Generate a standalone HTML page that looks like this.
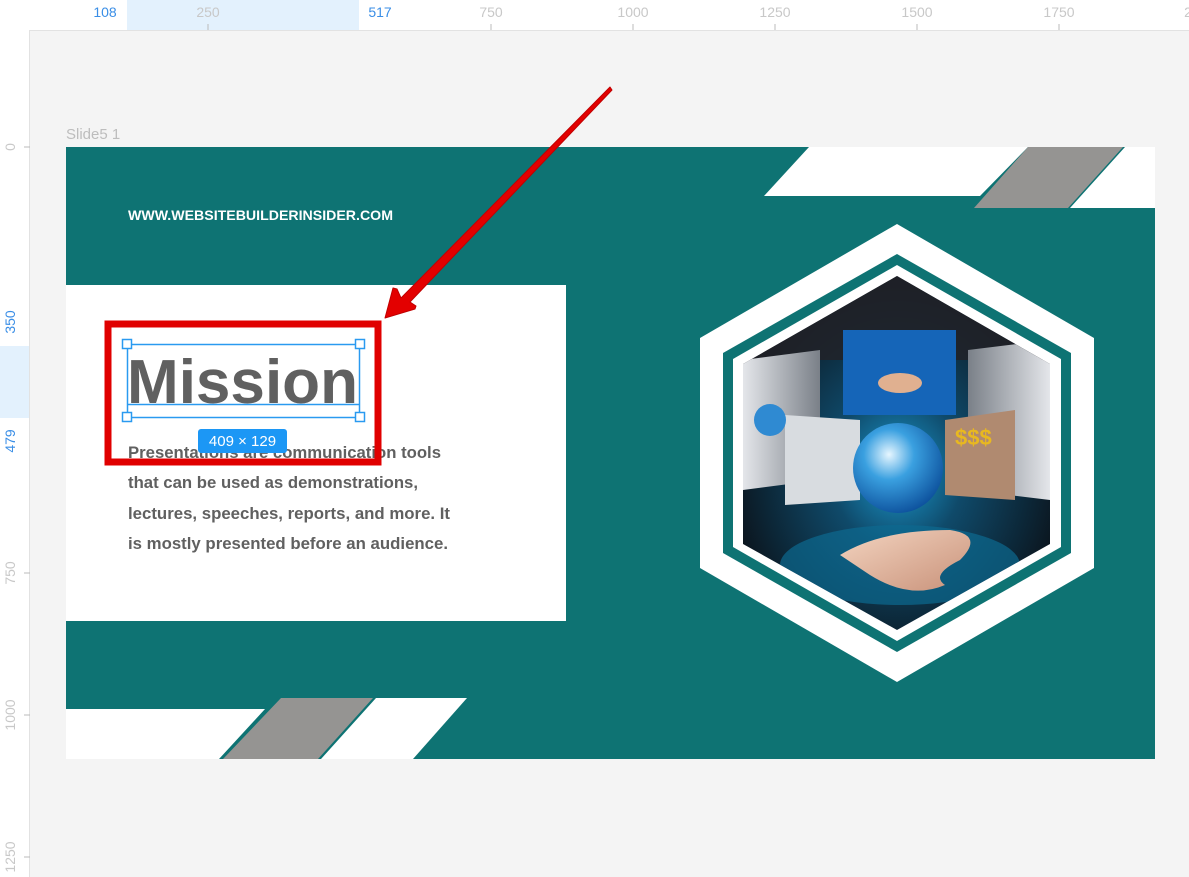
<!DOCTYPE html>
<html><head><meta charset="utf-8"><style>
html,body{margin:0;padding:0;background:#f4f4f4;width:1189px;height:877px;overflow:hidden}
svg{display:block}
text{font-family:"Liberation Sans",sans-serif}
</style></head><body>
<svg width="1189" height="877" viewBox="0 0 1189 877" xmlns="http://www.w3.org/2000/svg">
<defs>
<clipPath id="ph"><polygon points="897,276 1050,364 1050,544 897,630 743,544 743,364"/></clipPath>
<radialGradient id="glb" cx="0.4" cy="0.35" r="0.7"><stop offset="0" stop-color="#e6f6ff"/><stop offset="0.4" stop-color="#3aa0e0"/><stop offset="1" stop-color="#0b4e9a"/></radialGradient>
<radialGradient id="bg" cx="0.5" cy="0.55" r="0.6"><stop offset="0" stop-color="#1a9ad0"/><stop offset="0.35" stop-color="#0f4a6a"/><stop offset="1" stop-color="#0a0a0e"/></radialGradient>
<linearGradient id="sk" x1="0" y1="0" x2="1" y2="1"><stop offset="0" stop-color="#f3d4c0"/><stop offset="1" stop-color="#c9927a"/></linearGradient>
<linearGradient id="pl" x1="0" y1="0" x2="1" y2="0"><stop offset="0" stop-color="#e4e6ea"/><stop offset="1" stop-color="#7a8088"/></linearGradient>
<linearGradient id="pr" x1="1" y1="0" x2="0" y2="0"><stop offset="0" stop-color="#e4e6ea"/><stop offset="1" stop-color="#7a8088"/></linearGradient>
</defs>
<rect width="1189" height="877" fill="#f4f4f4"/>
<rect x="0" y="0" width="1189" height="30" fill="#fff"/>
<rect x="127" y="0" width="232" height="30" fill="#e3f1fd"/>
<line x1="0" y1="30.5" x2="1189" y2="30.5" stroke="#e2e2e2"/>
<rect x="0" y="30" width="30" height="847" fill="#fff"/>
<rect x="0" y="346" width="30" height="72" fill="#e3f1fd"/>
<line x1="29.5" y1="30" x2="29.5" y2="877" stroke="#e2e2e2"/>
<g font-size="14" fill="#c8c8c8" text-anchor="middle">
<text x="105" y="17" fill="#3a8ee6">108</text>
<text x="208" y="17">250</text>
<text x="380" y="17" fill="#3a8ee6">517</text>
<text x="491" y="17">750</text>
<text x="633" y="17">1000</text>
<text x="775" y="17">1250</text>
<text x="917" y="17">1500</text>
<text x="1059" y="17">1750</text>
<text x="1188" y="17">2</text>
</g>
<g stroke="#bbb"><line x1="208" y1="24" x2="208" y2="30"/><line x1="491" y1="24" x2="491" y2="30"/><line x1="633" y1="24" x2="633" y2="30"/><line x1="775" y1="24" x2="775" y2="30"/><line x1="917" y1="24" x2="917" y2="30"/><line x1="1059" y1="24" x2="1059" y2="30"/>
<line x1="24" y1="147" x2="30" y2="147"/><line x1="24" y1="573" x2="30" y2="573"/><line x1="24" y1="715" x2="30" y2="715"/><line x1="24" y1="857" x2="30" y2="857"/></g>
<g font-size="14" fill="#c8c8c8" text-anchor="middle">
<text transform="translate(15,147) rotate(-90)">0</text>
<text transform="translate(15,322) rotate(-90)" fill="#3a8ee6">350</text>
<text transform="translate(15,441) rotate(-90)" fill="#3a8ee6">479</text>
<text transform="translate(15,573) rotate(-90)">750</text>
<text transform="translate(15,715) rotate(-90)">1000</text>
<text transform="translate(15,857) rotate(-90)">1250</text>
</g>
<text x="66" y="139" font-size="15" fill="#bdbdbd">Slide5 1</text>
<rect x="66" y="147" width="1089" height="612" fill="#0e7373"/>
<polygon points="809,147 1028,147 980,196 764,196" fill="#fff"/>
<polygon points="1125,147 1155,147 1155,208 1070,208" fill="#fff"/>
<polygon points="1028,147 1123,147 1068,208 974,208" fill="#959492"/>
<polygon points="66,709 265,709 219,759 66,759" fill="#fff"/>
<polygon points="281,698 373,698 318,759 223,759" fill="#959492"/>
<polygon points="376,698 467,698 413,759 321,759" fill="#fff"/>
<rect x="66" y="285" width="500" height="336" fill="#fff"/>
<text x="128" y="220" font-size="14" font-weight="bold" fill="#fff" textLength="265" lengthAdjust="spacingAndGlyphs">WWW.WEBSITEBUILDERINSIDER.COM</text>
<text x="127" y="403" font-size="62" font-weight="bold" fill="#606060" textLength="231" lengthAdjust="spacingAndGlyphs">Mission</text>
<g font-size="16.6" font-weight="bold" fill="#606060">
<text x="128" y="458" textLength="313" lengthAdjust="spacingAndGlyphs">Presentations are communication tools</text>
<text x="128" y="488" textLength="290" lengthAdjust="spacingAndGlyphs">that can be used as demonstrations,</text>
<text x="128" y="519" textLength="322" lengthAdjust="spacingAndGlyphs">lectures, speeches, reports, and more. It</text>
<text x="128" y="549" textLength="320" lengthAdjust="spacingAndGlyphs">is mostly presented before an audience.</text>
</g>
<polygon points="897,224 1094,338 1094,568 897,682 700,568 700,338" fill="#fff"/>
<polygon points="897,254 1071,353 1071,553 897,652 723,553 723,353" fill="#0e7373"/>
<polygon points="897,265 1061,359 1061,547 897,641 733,547 733,359" fill="#fff"/>
<g clip-path="url(#ph)">
<rect x="740" y="270" width="315" height="365" fill="url(#bg)"/>
<rect x="740" y="270" width="315" height="90" fill="#222228" opacity="0.85"/>
<polygon points="743,360 820,350 820,480 743,490" fill="url(#pl)"/>
<polygon points="785,415 860,420 860,500 785,505" fill="#d8dce0"/>
<polygon points="968,350 1050,340 1050,500 968,490" fill="url(#pr)"/>
<polygon points="945,420 1015,410 1015,500 945,495" fill="#b08a70"/>
<rect x="843" y="330" width="113" height="85" fill="#1565b8"/>
<ellipse cx="900" cy="383" rx="22" ry="10" fill="#e0b090"/>
<circle cx="770" cy="420" r="16" fill="#2f8ad2"/>
<ellipse cx="900" cy="565" rx="120" ry="40" fill="#0d6a90" opacity="0.7"/>
<path d="M840,555 Q880,530 950,530 Q985,535 960,560 Q930,575 945,585 Q910,600 870,575 Z" fill="url(#sk)"/>
<circle cx="898" cy="468" r="45" fill="url(#glb)"/>
<text x="955" y="445" font-size="22" font-weight="bold" fill="#e8b820">$$$</text>
</g>
<rect x="108" y="324" width="270" height="138" fill="none" stroke="#e00000" stroke-width="7"/>
<rect x="127.5" y="344.5" width="232" height="73" fill="none" stroke="#2a9af0" stroke-width="1.5"/>
<line x1="127" y1="404.5" x2="360" y2="404.5" stroke="#2a9af0" stroke-width="1.5"/>
<g fill="#fff" stroke="#2a9af0" stroke-width="1.5">
<rect x="122.5" y="339.5" width="9" height="9"/><rect x="355.5" y="339.5" width="9" height="9"/>
<rect x="122.5" y="412.5" width="9" height="9"/><rect x="355.5" y="412.5" width="9" height="9"/>
</g>
<rect x="198" y="429" width="89" height="24" rx="3" fill="#1c97f5"/>
<text x="242.5" y="446" font-size="15" fill="#fff" text-anchor="middle">409 × 129</text>
<polygon points="610,87 612,90 410,302 416,306 415,309 385,318 393,288 397,289 401,298" fill="#e30000" stroke="#c00000" stroke-width="1" stroke-linejoin="round"/>
</svg>
</body></html>
